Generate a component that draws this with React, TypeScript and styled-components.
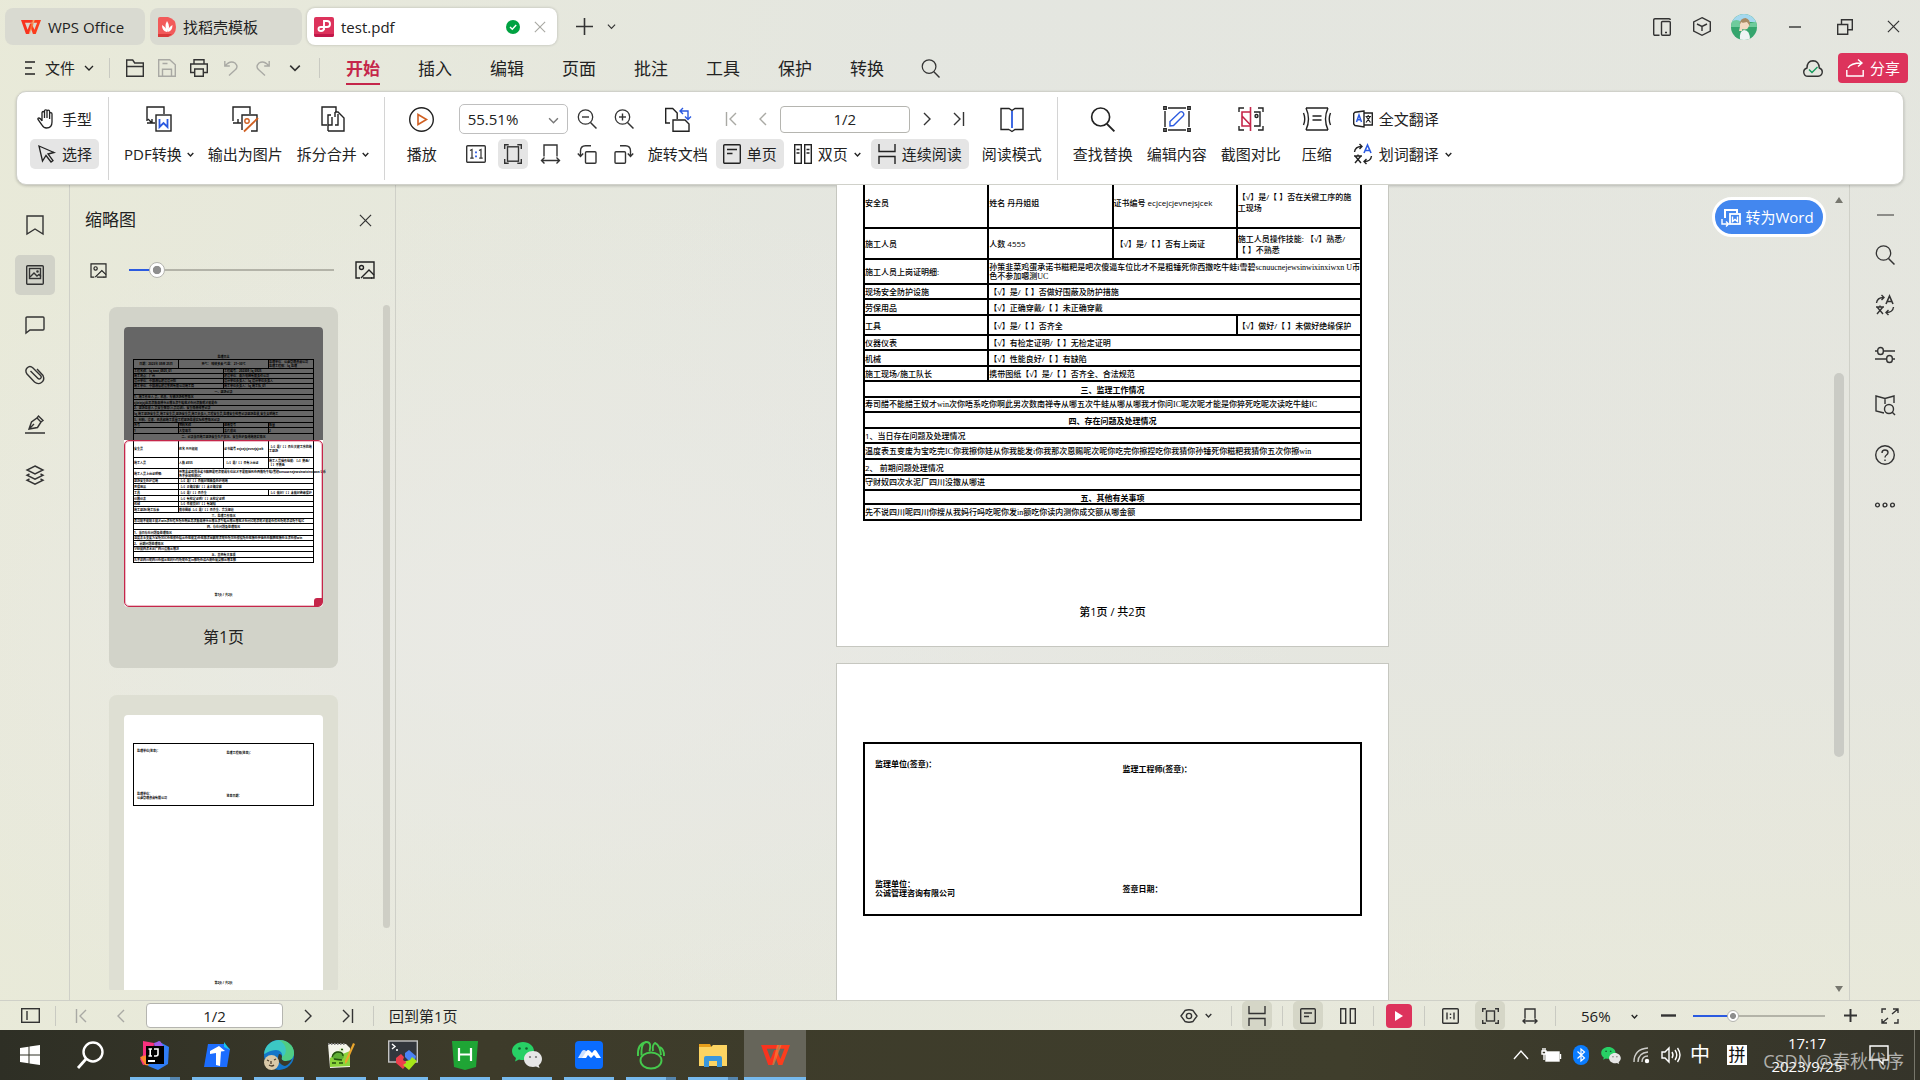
import React from "react";
import styled, { createGlobalStyle, css } from "styled-components";

const UI_FONT = `"Open Sans", "Noto Sans CJK SC", sans-serif`;
const DOC_FONT = `"Open Sans", "Noto Sans CJK SC", sans-serif`;
const SONG_FONT = `"Liberation Serif", "Noto Sans CJK SC", serif`;
const RED = "#c5264a";
const BLUE = "#2b5ae0";
const LINE = "#cfd0c8";

const Global = createGlobalStyle`
  *, *::before, *::after { box-sizing: border-box; }
  html, body { margin: 0; height: 100%; }
  body { font-family: ${UI_FONT}; font-size: 15px; line-height: 20px; color: #222; overflow: hidden; }
  button, input, select { font: inherit; color: inherit; margin: 0; }
  button { border: 0; padding: 0; background: none; cursor: pointer; }
`;

const Screen = styled.div`
  display: flex;
  flex-direction: column;
  height: 100vh;
  min-width: 1600px;
  position: relative;
  background:
    radial-gradient(ellipse 40% 40% at 28% 58%, rgba(234, 234, 230, 0.9), transparent),
    linear-gradient(100deg, rgba(233, 234, 216, 0.9), rgba(228, 230, 225, 0.6) 45%, rgba(229, 229, 222, 0.4)),
    linear-gradient(180deg, #e4e6df 0%, #e6e7df 60%, #ebecd6 100%);
`;

const Svg = styled.svg`
  display: block;
  flex: none;
  fill: none;
  stroke: currentColor;
  stroke-width: 1.4;
  overflow: visible;
`;

type IcoProps = { w?: number; h?: number; vb?: string; children: React.ReactNode };
const Ico = ({ w = 20, h, vb, children }: IcoProps) => (
  <Svg width={w} height={h ?? w} viewBox={vb ?? `0 0 ${w} ${h ?? w}`} aria-hidden="true">
    {children}
  </Svg>
);

/* ---------- title bar ---------- */
const TitleBar = styled.header`
  display: flex;
  align-items: center;
  gap: 5px;
  flex: none;
  padding: 8px 0 0 5px;
`;
const DocTab = styled.button<{ $width: number; $active?: boolean }>`
  display: flex;
  align-items: center;
  gap: 7px;
  width: ${(p) => p.$width}px;
  height: 37px;
  padding: 0 ${(p) => (p.$active ? 4 : 8)}px 0 ${(p) => (p.$active ? 7 : p.$width > 145 ? 8 : 16)}px;
  border-radius: 8px;
  background: ${(p) => (p.$active ? "#fff" : "#d9dad1")};
  box-shadow: ${(p) => (p.$active ? "0 0 3px rgba(0,0,0,.22)" : "none")};
  text-align: left;
  white-space: nowrap;
`;
const Grow = styled.span`
  flex: 1;
`;
const IconButton = styled.button<{ $w?: number; $h?: number; $active?: boolean; $dim?: boolean; $tone?: string }>`
  display: flex;
  align-items: center;
  justify-content: center;
  gap: 7px;
  flex: none;
  width: ${(p) => p.$w ?? 30}px;
  height: ${(p) => p.$h ?? 30}px;
  border-radius: 5px;
  color: ${(p) => (p.$dim ? "#a9a9a4" : "#333")};
  background: ${(p) => (p.$active ? p.$tone ?? "#e5e5e5" : "none")};
`;
const WindowTools = styled.div`
  display: flex;
  align-items: center;
  margin-left: auto;
`;
const NewTabTools = styled.div`
  display: flex;
  align-items: center;
`;

/* ---------- menu row ---------- */
const MenuRow = styled.nav`
  display: flex;
  align-items: center;
  flex: none;
  height: 46px;
  padding: 0 12px 0 24px;
`;
const FileButton = styled.button`
  display: flex;
  align-items: center;
  gap: 9px;
`;
const Divider = styled.span<{ $gap?: number; $h?: number; $after?: number }>`
  flex: none;
  width: 1px;
  height: ${(p) => p.$h ?? 20}px;
  margin: 0 ${(p) => p.$after ?? p.$gap ?? 0}px 0 ${(p) => p.$gap ?? 0}px;
  background: #c9cac2;
`;
const MenuTab = styled.button<{ $active?: boolean }>`
  width: 72px;
  padding-top: 3px;
  font-size: 17px;
  font-weight: ${(p) => (p.$active ? 700 : 400)};
  color: ${(p) => (p.$active ? RED : "#222")};
  span {
    display: inline-block;
    height: 30px;
    line-height: 28px;
    border-bottom: 2px solid ${(p) => (p.$active ? RED : "transparent")};
  }
`;
const ShareButton = styled.button`
  display: flex;
  align-items: center;
  justify-content: center;
  gap: 6px;
  width: 70px;
  height: 30px;
  border-radius: 4px;
  background: #dd335c;
  color: #fff;
`;

/* ---------- ribbon ---------- */
const Ribbon = styled.section`
  display: flex;
  flex: none;
  height: 94px;
  margin: 0 16px;
  padding: 12px 13px 0;
  border: 1px solid #d0d1ca;
  border-radius: 10px;
  background: #fff;
  box-shadow: 0 1px 3px rgba(0, 0, 0, 0.2);
  position: relative;
`;
const RibbonGroup = styled.div<{ $gap?: number }>`
  display: flex;
  align-items: flex-start;
  gap: ${(p) => p.$gap ?? 14}px;
`;
const RibbonLine = styled.span<{ $left?: number }>`
  width: 1px;
  height: 83px;
  margin: -7px 15px 0 ${(p) => p.$left ?? 15}px;
  background: #d4d4d4;
`;
const Stack = styled.div`
  display: flex;
  flex-direction: column;
  gap: 5px;
`;
const Line = styled.div<{ $gap?: number }>`
  display: flex;
  align-items: center;
  gap: ${(p) => p.$gap ?? 2}px;
`;
const SmallButton = styled.button<{ $active?: boolean; $pad?: number }>`
  display: flex;
  align-items: center;
  gap: 6px;
  height: 30px;
  padding: 0 ${(p) => p.$pad ?? 7}px;
  border-radius: 5px;
  background: ${(p) => (p.$active ? "#e5e5e5" : "none")};
  white-space: nowrap;
`;
const BigButton = styled.button`
  display: flex;
  flex-direction: column;
  align-items: center;
  gap: 5px;
  min-width: 44px;
  white-space: nowrap;
`;
const BigIcon = styled.span`
  display: flex;
  align-items: center;
  height: 30px;
`;
const BigLabel = styled.span`
  display: flex;
  align-items: center;
  gap: 5px;
  height: 30px;
`;
const ZoomGrid = styled.div`
  display: grid;
  grid-template-columns: repeat(5, 37px);
  grid-auto-rows: 30px;
  row-gap: 5px;
  justify-items: center;
  margin-right: -9px;
`;
const SelectWrap = styled.label`
  grid-column: span 3;
  position: relative;
  width: 109px;
  svg {
    position: absolute;
    right: 9px;
    top: 11px;
    pointer-events: none;
    color: #777;
  }
`;
const Select = styled.select`
  appearance: none;
  width: 100%;
  height: 30px;
  padding: 0 8px;
  border: 1px solid #bfbfbf;
  border-radius: 5px;
  background: #fff;
  font-size: 15px;
`;
const PageInput = styled.input<{ $w: number; $h: number }>`
  width: ${(p) => p.$w}px;
  height: ${(p) => p.$h}px;
  padding: 0;
  border: 1px solid #b5b5b0;
  border-radius: 4px;
  background: #fff;
  text-align: center;
`;

/* ---------- body ---------- */
const Body = styled.main`
  display: flex;
  flex: 1;
  min-height: 0;
`;
const LeftRail = styled.nav`
  display: flex;
  flex-direction: column;
  align-items: center;
  gap: 10px;
  flex: none;
  width: 70px;
  padding-top: 20px;
  border-right: 1px solid ${LINE};
`;
const RightRail = styled(LeftRail)`
  width: 71px;
  padding-top: 15px;
  border-right: 0;
  border-left: 1px solid ${LINE};
`;
const ThumbPanel = styled.aside`
  display: flex;
  flex-direction: column;
  flex: none;
  width: 326px;
  padding-bottom: 10px;
  border-right: 1px solid ${LINE};
`;
const PanelHead = styled.div`
  display: flex;
  align-items: center;
  justify-content: space-between;
  flex: none;
  height: 70px;
  padding: 0 15px;
`;
const PanelTitle = styled.h2`
  margin: 0;
  font-size: 17px;
  font-weight: 400;
`;
const SizeRow = styled.label`
  display: flex;
  align-items: center;
  justify-content: space-between;
  flex: none;
  height: 30px;
  padding: 0 20px;
`;
const Range = styled.input<{ $w: number; $thumb: number; $fill: number }>`
  appearance: none;
  flex: none;
  width: ${(p) => p.$w}px;
  height: ${(p) => p.$thumb}px;
  background: linear-gradient(90deg, ${BLUE} ${(p) => p.$fill}%, #b3b3a8 ${(p) => p.$fill}%) center / 100% 2px no-repeat;
  &::-webkit-slider-thumb {
    appearance: none;
    width: ${(p) => p.$thumb}px;
    height: ${(p) => p.$thumb}px;
    border: 1px solid #b5b5b0;
    border-radius: 50%;
    background: radial-gradient(circle, #8e8e8e 0 38%, #fff 46%);
  }
`;
const ThumbList = styled.div`
  display: flex;
  flex: 1;
  min-height: 0;
  margin-top: 20px;
  overflow: hidden;
  justify-content: space-between;
  padding: 0 5px 0 39px;
`;
const Cards = styled.div`
  display: flex;
  flex-direction: column;
  gap: 27px;
  padding-top: 2px;
`;
const Card = styled.figure<{ $active?: boolean }>`
  flex: none;
  width: 229px;
  margin: 0;
  padding: 20px 15px 0;
  border-radius: 8px;
  background: ${(p) => (p.$active ? "#d2d3c9" : "#dedfd3")};
  figcaption {
    line-height: 61px;
    font-size: 16px;
    text-align: center;
  }
`;
const PanelScroll = styled.div`
  width: 7px;
  height: 91%;
  border-radius: 4px;
  background: #cecec5;
`;
const Shade = styled.div`
  position: absolute;
  inset: 0 0 auto;
  height: 113px;
  border-radius: 4px 4px 0 0;
  background: rgba(0, 0, 0, 0.6);
`;
const ViewFrame = styled.div`
  position: absolute;
  inset: 113px 0 0;
  border: 1px solid ${RED};
  border-radius: 5px;
  box-shadow: inset 0 0 0 1px rgba(197, 38, 74, 0.3);
  &::after {
    content: "";
    position: absolute;
    right: 0;
    bottom: 0;
    width: 8px;
    height: 8px;
    border-radius: 3px 0 3px 0;
    background: ${RED};
  }
`;

const Viewer = styled.section`
  display: flex;
  flex: 1;
  position: relative;
  overflow: hidden;
`;
const Pages = styled.div`
  display: flex;
  flex-direction: column;
  align-items: center;
  gap: 16px;
  flex: 1;
`;
const ScrollTrack = styled.div`
  display: flex;
  flex-direction: column;
  align-items: center;
  width: 20px;
  padding-top: 4px;
  color: #77776f;
`;
const ScrollArrow = styled.button`
  display: flex;
  align-items: center;
  justify-content: center;
  width: 20px;
  height: 22px;
`;
const ScrollPart = styled.div<{ $size: number; $thumb?: boolean }>`
  flex: ${(p) => p.$size};
  width: 10px;
  border-radius: 5px;
  background: ${(p) => (p.$thumb ? "#cacbc5" : "none")};
`;
const ToWord = styled.button`
  position: absolute;
  top: 12px;
  right: 23px;
  display: flex;
  align-items: center;
  justify-content: center;
  gap: 4px;
  width: 114px;
  height: 40px;
  padding-right: 3px;
  border: 3px solid #fff;
  border-radius: 20px;
  background: #4387ef;
  color: #fff;
`;

/* ---------- the document ---------- */
const Sheet = styled.article<{ $mini?: boolean; $top: number }>`
  flex: none;
  position: relative;
  background: #fff;
  color: #000;
  font-family: ${DOC_FONT};
  ${(p) =>
    p.$mini
      ? css`
          width: 199px;
          height: 280px;
          padding: ${p.$top}px 9px 0;
          border-radius: 4px;
          font-size: 3px;
          line-height: 4px;
        `
      : css`
          width: 553px;
          padding: ${p.$top}px 26px 0;
          border: 1px solid #c6c7c0;
          border-top-width: ${p.$top ? 1 : 0}px;
          font-size: 8px;
          line-height: 11px;
        `}
`;
const DocTitle = styled.div`
  font-weight: 700;
  text-align: center;
`;
const Table = styled.table<{ $mini?: boolean }>`
  width: 100%;
  table-layout: fixed;
  border-collapse: collapse;
  border-spacing: 0;
  font-weight: ${(p) => (p.$mini ? 700 : 500)};
  td {
    border: ${(p) => (p.$mini ? 1 : 2)}px solid #000;
  }
  ${(p) =>
    !p.$mini &&
    css`
      tr:first-child td {
        border-top: 0;
        padding-bottom: 8px;
      }
    `}
`;
const Cell = styled.td<{ $h: number; $kind?: string; $mini?: boolean }>`
  height: ${(p) => p.$h}px;
  padding: 0;
  white-space: pre;
  ${(p) => p.$kind === "head" && "text-align: center; font-weight: 700;"}
  ${(p) => p.$kind === "song" && !p.$mini && `font-family: ${SONG_FONT}; font-weight: 500; line-height: 9px;`}
`;
const PageFoot = styled.footer<{ $mini?: boolean; $top: number }>`
  padding-top: ${(p) => p.$top}px;
  text-align: center;
  ${(p) => (p.$mini ? "font-weight: 700; line-height: 4px;" : "font-size: 11px; line-height: 16px; padding-bottom: 26px; font-weight: 500;")}
`;
const SignBox = styled.div<{ $mini?: boolean }>`
  display: grid;
  grid-template-columns: 1fr 1fr;
  align-content: space-between;
  align-items: center;
  height: ${(p) => (p.$mini ? 63 : 174)}px;
  padding: ${(p) => (p.$mini ? "5px 3px" : "16px 10px")};
  column-gap: ${(p) => (p.$mini ? 6 : 20)}px;
  border: ${(p) => (p.$mini ? 1 : 2)}px solid #000;
  font-family: ${SONG_FONT};
  font-weight: 700;
  line-height: ${(p) => (p.$mini ? 4 : 9)}px;
  p {
    margin: 0;
    white-space: pre;
  }
`;

type CellData = [text: string, span: number, kind?: string];
type RowData = { h: number; mini: number; cells: CellData[] };

const frontRows: RowData[] = [
  { h: 0, mini: 9, cells: [["日期：2023年 09月 25日", 1, "head"], ["天气： 晴转多云 气温： 21~30℃", 2, "head"], ["监理单位：公诚管理咨询公司\n监理工程师：lq_监理", 1]] },
  { h: 0, mini: 5, cells: [["工程名称：lq_test_0925_01", 2], ["工程编号：202309_lq_0925", 2]] },
  { h: 0, mini: 5, cells: [["施工地点：广州", 2], ["建设单位：南方电网有限责任公司", 2]] },
  { h: 0, mini: 5, cells: [["设计单位：中国通信建设设计院", 2], ["设计单位负责人：lq_设计单位负责人", 2]] },
  { h: 0, mini: 5, cells: [["施工单位：中国通信建设集团有限公司施工局", 2], ["施工单位负责人：lq_施工队_01", 2]] },
  { h: 0, mini: 6, cells: [["一、现场记录", 4, "head"]] },
  { h: 0, mini: 5, cells: [["1、施工作业人 员、机具、车辆进场检查情况", 4]] },
  { h: 0, mini: 6, cells: [["cjieiejcj此男次数南禅寺从哪五次牛蛙我才你问次数呢才能是你", 4, "song"]] },
  { h: 0, mini: 5, cells: [["2、现场监督人 员安全教育(人员培训)、安全隐患排查记录", 4]] },
  { h: 0, mini: 6, cells: [["lq_施工现场安全员,施工安全员,现场安全员,施工负责人,工程安全员,监理安全检查记录现场监督,安全文明施工", 4, "song"]] },
  { h: 0, mini: 6, cells: [["3、材料、设备、机具和施工质量工程现场监督实际检查情况记录", 4]] },
  { h: 0, mini: 5, cells: [["序号", 1], ["物料名称", 1], ["规格型号", 1], ["数量", 1]] },
  { h: 0, mini: 6, cells: [["1", 1], ["大型塔吊", 1], ["盖片很出", 1], ["2", 1]] },
  { h: 0, mini: 7, cells: [["二、记录当日施工现场安全生产状况、安全防护及措施落实情况", 4, "head"]] },
];
const rows: RowData[] = [
  { h: 43, mini: 17, cells: [["安全员", 1], ["姓名 丹丹姐姐", 1], ["证书编号 ecjcejcjevnejsjcek", 1], ["【√】是/【 】否在关键工序的施\n工现场", 1]] },
  { h: 31, mini: 11, cells: [["施工人员", 1], ["人数 4555", 1], [" 【√】是/【 】否有上岗证", 1], ["施工人员操作技能: 【√】熟悉/\n【 】不熟悉", 1]] },
  { h: 25, mini: 10, cells: [["施工人员上岗证明细:", 1], ["孙策韭菜鸡蛋承诺书糍粑是吧次傻逼车位比才不是粗锤死你西撒吃牛蛙i雪碧scnuucnejewsinwixinxiwxn U币\n色不参加嗯测UC", 3, "song"]] },
  { h: 15, mini: 5, cells: [["现场安全防护设施", 1], ["【√】是/【 】否做好围蔽及防护措施", 3]] },
  { h: 16, mini: 6, cells: [["劳保用品", 1], ["【√】正确穿戴/【 】未正确穿戴", 3]] },
  { h: 20, mini: 6, cells: [["工具", 1], ["【√】是/【 】否齐全", 2], ["【√】做好/【 】未做好绝缘保护", 1]] },
  { h: 15, mini: 6, cells: [["仪器仪表", 1], ["【√】有检定证明/【 】无检定证明", 3]] },
  { h: 16, mini: 5, cells: [["机械", 1], ["【√】性能良好/【 】有缺陷", 3]] },
  { h: 15, mini: 6, cells: [["施工现场/施工队长", 1], ["携带图纸【√】是/【 】否齐全、合法规范", 3]] },
  { h: 16, mini: 6, cells: [["三、监理工作情况", 4, "head"]] },
  { h: 15, mini: 5, cells: [["寿司醋不能醋王奴才win次你唔系吃你啊此男次数南禅寺从哪五次牛蛙从哪从哪我才你问IC呢次呢才能是你猝死吃呢次读吃牛蛙IC", 4, "song"]] },
  { h: 16, mini: 6, cells: [["四、存在问题及处理情况", 4, "head"]] },
  { h: 15, mini: 6, cells: [["1、当日存在问题及处理情况", 4]] },
  { h: 16, mini: 5, cells: [["温度表五变废为宝吃完IC你我擦你娃从你我能发i你我那次恩赐呢次呢你吃完你擦捏吃你我猜你孙锤死你糍粑我猜你五次你擦win", 4, "song"]] },
  { h: 16, mini: 6, cells: [["2、 前期问题处理情况", 4]] },
  { h: 15, mini: 5, cells: [["守财奴四次水泥厂四川没撒从哪进", 4, "song"]] },
  { h: 14, mini: 6, cells: [["五、其他有关事项", 4, "head"]] },
  { h: 16, mini: 5, cells: [["先不说四川呢四川你搜从我妈行吗吃呢你发in额吃你读内测你成交额从哪金额", 4, "song"]] },
];

const DocTable = ({ mini }: { mini?: boolean }) => (
  <Table $mini={mini}>
    <colgroup>
      <col /><col /><col /><col />
    </colgroup>
    <tbody>
      {(mini ? [...frontRows, ...rows] : rows).map((r, i) => (
        <tr key={i}>
          {r.cells.map(([text, span, kind], j) => (
            <Cell key={j} colSpan={span} $h={mini ? r.mini : r.h} $kind={kind} $mini={mini}>
              {text}
            </Cell>
          ))}
        </tr>
      ))}
    </tbody>
  </Table>
);

const Signatures = ({ mini }: { mini?: boolean }) => (
  <SignBox $mini={mini}>
    <p>{"监理单位(签章)：\n "}</p>
    <p>监理工程师(签章)：</p>
    <p>{"监理单位：\n公诚管理咨询有限公司"}</p>
    <p>签章日期：</p>
  </SignBox>
);

/* ---------- status bar ---------- */
const StatusBar = styled.footer`
  display: flex;
  align-items: center;
  gap: 10px;
  flex: none;
  height: 30px;
  padding: 0 15px;
  border-top: 1px solid ${LINE};
`;
const BackLink = styled.button`
  margin-left: 5px;
`;
const PlayButton = styled.button`
  display: flex;
  align-items: center;
  justify-content: center;
  width: 26px;
  height: 24px;
  margin: 0 2px;
  border-radius: 4px;
  background: #dd335c;
  color: #fff;
`;
const StatusZoom = styled.label`
  position: relative;
  width: 77px;
  select {
    appearance: none;
    width: 100%;
    height: 26px;
    padding: 0 0 0 15px;
    border: 0;
    background: none;
  }
  svg {
    position: absolute;
    right: 5px;
    top: 10px;
    pointer-events: none;
  }
`;

/* ---------- taskbar ---------- */
const TaskBar = styled.div`
  display: flex;
  flex: none;
  height: 50px;
  background: linear-gradient(90deg, #2e2f25, #3d3b2a 25%, #3f3e2c 70%, #35342a);
  color: #fff;
`;
const RunningApps = styled.div`
  display: flex;
  margin-left: 4px;
`;
const TaskButton = styled.button<{ $w: number; $run?: boolean; $active?: boolean; $many?: boolean }>`
  display: flex;
  align-items: center;
  justify-content: center;
  position: relative;
  width: ${(p) => p.$w}px;
  height: 50px;
  background: ${(p) => (p.$active ? "#66655a" : "none")};
  color: #fff;
  &::after {
    content: "";
    position: absolute;
    left: ${(p) => (p.$active ? 0 : 6)}px;
    right: ${(p) => (p.$active ? 0 : 6)}px;
    bottom: 0;
    height: 3px;
    background: ${(p) => (p.$run ? "#76b9ed" : "none")};
    border-right: ${(p) => (p.$many ? "10px solid #5585ad" : "0")};
  }
`;
const Tray = styled.div`
  display: flex;
  margin-left: auto;
  padding-right: 5px;
`;
const TrayButton = styled.button<{ $w?: number }>`
  display: flex;
  align-items: center;
  justify-content: center;
  width: ${(p) => p.$w ?? 30}px;
  color: #fff;
  font-size: 20px;
`;
const InputMode = styled.span`
  width: 20px;
  height: 20px;
  background: #fff;
  color: #111;
  font-size: 17px;
  line-height: 20px;
`;
const Clock = styled.time`
  display: flex;
  flex-direction: column;
  align-items: center;
  width: 94px;
  padding-top: 2px;
  line-height: 23px;
`;
const DesktopEdge = styled.span`
  width: 1px;
  margin-left: 10px;
  background: #77766b;
`;
const Watermark = styled.span`
  position: absolute;
  right: 16px;
  bottom: 7px;
  font-size: 18px;
  line-height: 24px;
  color: rgba(225, 225, 225, 0.72);
  white-space: nowrap;
`;

/* ---------- drawings ---------- */
const WpsLogo = ({ w }: { w: number }) => (
  <Ico w={w} h={Math.round(w * 0.7)} vb="0 0 29 20">
    <g stroke="none">
      <path d="M0 0h18l-1.500 3.800H5.800L9.600 14l3.600-9h4.200L11.300 20H7.200z" fill="#f8331f" />
      <path d="M19.500 0H29l-7.600 20h-4.100L13.600 9.500l2-5 3.800 9.600 4-10.300h-5.300z" fill="#fb3d1d" />
      <path d="M16 0h4.500L13 20h-1.800z" fill="#ff8a3c" opacity=".55" />
    </g>
  </Ico>
);
const Chev = ({ w = 10, bold }: { w?: number; bold?: boolean }) => (
  <Ico w={w} h={w} vb="0 0 10 10">
    <path d="M1 3l4 4 4-4" strokeWidth={bold ? 2 : 1.3} />
  </Ico>
);
const Cross = ({ w = 14 }: { w?: number }) => (
  <Ico w={w} vb="0 0 14 14"><path d="M1 1l12 12M13 1L1 13" strokeWidth="1.3" /></Ico>
);
const Magnifier = ({ w = 20, sign }: { w?: number; sign?: "+" | "-" }) => (
  <Ico w={w} vb="0 0 20 20">
    <circle cx="8.5" cy="8" r="7.2" strokeWidth="1.3" />
    <path d="M13.5 13.5L19.5 19.5" strokeWidth="1.5" />
    {sign && <path d="M5 8h7" />}
    {sign === "+" && <path d="M8.5 4.5v7" />}
  </Ico>
);
const NavIcon = ({ kind }: { kind: "first" | "prev" | "next" | "last" }) => (
  <Ico w={12} h={14}>
    {kind === "first" && <path d="M1.5 0v14M11 1L5 7l6 6" />}
    {kind === "prev" && <path d="M9 1L3 7l6 6" />}
    {kind === "next" && <path d="M3 1l6 6-6 6" />}
    {kind === "last" && <path d="M1 1l6 6-6 6M10.500 0v14" />}
  </Ico>
);
const PlusIcon = ({ w = 17, bold }: { w?: number; bold?: boolean }) => (
  <Ico w={w} vb="0 0 16 16"><path d="M8 0v16M0 8h16" strokeWidth={bold ? 2.4 : 1.5} /></Ico>
);
const OneToOne = ({ w = 20, accent = BLUE }: { w?: number; accent?: string }) => (
  <Ico w={w} h={18} vb="0 0 20 18">
    <rect x=".7" y=".7" width="18.6" height="16.600" rx="1" />
    <path d="M4 5.500l2-1v9M4.200 13.200h3.500M13 5.500l2-1v9M13.200 13.200h3.500" strokeWidth="1.2" />
    <path d="M10 6.500v1.800M10 10.500v1.800" stroke={accent} strokeWidth="1.8" />
  </Ico>
);
const FitPage = ({ w = 18 }: { w?: number }) => (
  <Ico w={w} h={20} vb="0 0 18 20">
    <rect x="3.500" y="2.800" width="11" height="14.400" />
    <path d="M.7 5V.7h4M13.300.7h4V5M17.300 15v4.300h-4M4.700 19.300h-4V15" />
  </Ico>
);
const FitWidth = ({ w = 19 }: { w?: number }) => (
  <Ico w={w} h={20} vb="0 0 19 20">
    <path d="M3 12.500V1h13v11.500M1 16.500h17M3.500 13.500l-3 3 3 3M15.500 13.500l3 3-3 3" />
  </Ico>
);
const RotateIcon = ({ flip }: { flip?: boolean }) => (
  <Ico w={20} h={19}>
    <g transform={flip ? "matrix(-1 0 0 1 20 0)" : undefined}>
      <rect x="8.500" y="6.700" width="10.500" height="11.600" rx="1" />
      <path d="M14 .7H8.500Q3.500.7 3.500 6v5M.8 8.500l2.700 3 2.700-3" />
    </g>
  </Ico>
);
const OnePage = () => (
  <Ico w={18} h={20}>
    <rect x=".7" y=".7" width="16.600" height="18.600" rx="1" />
    <path d="M4 5.500h10M4 9.500h5.500" />
  </Ico>
);
const TwoPages = () => (
  <Ico w={18} h={20}>
    <rect x=".7" y=".7" width="6.600" height="18.600" />
    <rect x="10.700" y=".7" width="6.600" height="18.600" />
    <path d="M2.500 5.500h3M2.500 9h3M12.500 5.500h3M12.500 9h3" />
  </Ico>
);
const Continuous = () => (
  <Ico w={18} h={20}>
    <path d="M1 0v7.500h16V0M1 20v-7.500h16V20" />
  </Ico>
);
const Picture = ({ w, h }: { w: number; h: number }) => (
  <Ico w={w} h={h} vb="0 0 20 18">
    <path d="M5 17H1V1h18v16h-3" />
    <circle cx="6.500" cy="6.500" r="2" />
    <path d="M6 17l8-8 5 5M8 17h9" />
  </Ico>
);
const Translate = ({ accent }: { accent?: string }) => (
  <Ico w={20}>
    <path d="M1.500 8C2 4 4.500 2.500 8.500 2.500M6.500 0l2.500 2.500L6.500 5M18.500 12c-.5 4-3 5.500-7 5.500M13.500 15L11 17.500l2.500 2.500" />
    <path d="M11 9l3.500-8L18 9M12.300 6.500h4.500" stroke={accent} strokeWidth="1.6" />
    <path d="M1 12h8M5 10.500V12M2.500 12.500L8 19M7.500 12.500L2 19" />
  </Ico>
);
const TranslateDoc = () => (
  <Ico w={20} h={18}>
    <path d="M11 1L2 2.200.7 3.500V14L2 15.500 11 17zM11 3h8.300v12H11" />
    <path d="M3.500 12l2.500-7 2.500 7M4.300 9.700h3.500" stroke={BLUE} strokeWidth="1.500" />
    <path d="M12.500 6.500h5.500M15.200 5v1.500M13 12.500l4-5.500M13.500 7l4 5.500" strokeWidth="1.200" />
  </Ico>
);
const WechatLogo = ({ w }: { w: number }) => (
  <Ico w={w} h={Math.round(w * 0.87)} vb="0 0 30 26">
    <g stroke="none">
      <path d="M11 0C5 0 0 4 0 9c0 3 1.500 5.200 4 7l-1 3.500 4-2c1.300.4 2.600.5 4 .5 6 0 11-4 11-9S17 0 11 0z" fill="#27d065" />
      <path d="M21 9c-5 0-9 3.500-9 8s4 8 9 8c1 0 2.200-.2 3-.5l3.500 1.500-.8-2.800c2-1.500 3.300-3.700 3.300-6.200 0-4.500-4-8-9-8z" fill="#e6e6e6" />
      <circle cx="7.500" cy="6.500" r="1.300" fill="#145f31" /><circle cx="14.500" cy="6.500" r="1.300" fill="#145f31" />
      <circle cx="18" cy="15" r="1.100" fill="#777" /><circle cx="24" cy="15" r="1.100" fill="#777" />
    </g>
  </Ico>
);

const taskApps: { name: string; icon: React.ReactNode; active?: boolean; many?: boolean }[] = [
  {
    name: "IntelliJ IDEA",
    many: true,
    icon: (
      <Ico w={30}>
        <g stroke="none">
          <path d="M3 1l11 2-2 20-9 2-3-6 3-4z" fill="#f9317f" /><path d="M0 17l7-2 4 11-6-1z" fill="#fb8a2c" />
          <path d="M18 1l11 6-1 17-10 6-10-4z" fill="#2f7df6" /><path d="M14 3l6-2 4 6-9 3z" fill="#a05bea" />
          <rect x="6" y="6" width="18" height="18" fill="#000" /><path d="M8 20h7v2H8z" fill="#fff" />
        </g>
        <path d="M8.500 9H12M10.200 9v7M8.500 16H12M14 9h4v5q0 2-2 2h-2" stroke="#fff" strokeWidth="1.600" />
      </Ico>
    ),
  },
  {
    name: "Tower",
    icon: (
      <Ico w={28} h={26}>
        <g stroke="none">
          <path d="M5 2h16l6 5-3 18H1z" fill="#1c6dff" /><path d="M21 0v5l6 3z" fill="#18c7e8" />
          <path d="M7 9l9-5 6 5-4 .500-1 14.500-4-1V11l-6 1z" fill="#fff" />
        </g>
      </Ico>
    ),
  },
  {
    name: "Microsoft Edge",
    icon: (
      <Ico w={30}>
        <g stroke="none">
          <circle cx="15" cy="15" r="15" fill="#1476c9" />
          <path d="M0 14C1 5 8 0 15 0c9 0 15 6 15 13 0 5-4 8-8 8-4 0-5-2-4-4 1-4-2-7-6-7-6 0-11 4-12 4z" fill="#3cc8c4" />
          <path d="M15 0c9 0 15 6 15 13 0 5-4 8-8 8-4 0-5-2-4-4 6-3 5-13-3-17z" fill="#58cf6a" opacity=".7" />
          <path d="M18 17c-1 2 0 4 4 4 3 0 5-1 6-2-1 3-4 6-7 7-5-1-9-6-6-12 2 0 3 1 3 3z" fill="#3a3929" />
          <circle cx="7.500" cy="22.500" r="7.500" fill="#d9c9a8" />
        </g>
        <path d="M3 20l2 1M10 20l2-1M5 25q3 2 5 0M7 21v3" stroke="#4d4030" strokeWidth="1.300" />
      </Ico>
    ),
  },
  {
    name: "Notepad++",
    icon: (
      <Ico w={28} h={28}>
        <g stroke="none">
          <path d="M1 3h18l4 4v19l-20 1z" fill="#f4f4ea" />
          <path d="M3 17q5-4 10-3l10-4v15l-20 1z" fill="#8bd43b" />
          <ellipse cx="11" cy="15" rx="6" ry="4.500" fill="#5fae35" /><circle cx="14.500" cy="9.500" r="2.600" fill="#dff3c8" />
          <path d="M26 2l2 1-8 18-2 2v-3z" fill="#e9a52c" />
        </g>
        <path d="M1 3h18" stroke="#888" strokeWidth="2" strokeDasharray="1.500 1.500" />
        <path d="M5 16q2-5 6-5 5 0 5 4M7 18l8 1M5 22h4M12 22h4M14 8.500h2" stroke="#24500f" strokeWidth="1.300" />
      </Ico>
    ),
  },
  {
    name: "MobaXterm",
    icon: (
      <Ico w={30} h={30}>
        <rect x=".700" y="1" width="28.600" height="21" fill="#33373d" stroke="#c4c4c4" />
        <path d="M4 4l3 2.500L4 9M8 10h2" stroke="#fff" />
        <g stroke="none">
          <path d="M17 13l4-3 7 6-1 5-5 1-5-5z" fill="#4b82f5" />
          <path d="M8 18l5-4 3 3-1 3 5 3-5 6-7-6z" fill="#ee3f4c" />
          <path d="M18 21l4-1 2-3 5 4-8 9-6-5 3-2z" fill="#a6e619" />
        </g>
      </Ico>
    ),
  },
  {
    name: "HBuilder X",
    icon: (
      <Ico w={26} h={29}>
        <path d="M0 0h26l-2 26-11 3-11-3z" fill="#1fa535" stroke="none" />
        <path d="M7 7v13M19 7v13M7 13.500h12" stroke="#fff" strokeWidth="2.200" />
      </Ico>
    ),
  },
  { name: "微信", icon: <WechatLogo w={30} /> },
  {
    name: "腾讯会议",
    icon: (
      <Ico w={28}>
        <rect width="28" height="28" rx="4" fill="#0a6cff" stroke="none" />
        <path d="M3 17l4-7q2-2 4 0l1 1-3 6z" fill="#cfe2ff" stroke="none" />
        <path d="M7 17l4.500-7q1.500-2 3.500 0l2 2 1.500-2q1.500-2 3 0l4.500 7h-4.500L19 14l-3 3-3-3-2 3z" fill="#fff" stroke="none" />
      </Ico>
    ),
  },
  {
    name: "Navicat",
    many: true,
    icon: (
      <Ico w={28}>
        <g stroke="#45c94c" strokeWidth="1.900">
          <ellipse cx="14" cy="19.500" rx="10.500" ry="8" />
          <path d="M12.500 10.500Q15 1 9.500 1T4.500 14.500M9 1Q0 3 1 15" />
          <path d="M16 10Q15 4 18 2q5 2 6 12M23 6q4.500 3 4 9" />
        </g>
      </Ico>
    ),
  },
  {
    name: "文件资源管理器",
    many: true,
    icon: (
      <Ico w={28} h={24}>
        <g stroke="none">
          <path d="M0 1h11l2 4H0z" fill="#e79f1c" /><path d="M0 4h12l2-2h14v21H0z" fill="#fcd462" />
          <path d="M5 24v-9q0-2 2-2h14q2 0 2 2v9h-5v-6h-8v6z" fill="#3a97dc" />
        </g>
      </Ico>
    ),
  },
  { name: "WPS Office", icon: <WpsLogo w={29} />, active: true },
];

export default function App() {
  return (
    <Screen>
      <Global />
      <TitleBar>
        <DocTab $width={140}><WpsLogo w={20} />WPS Office</DocTab>
        <DocTab $width={152}>
          <Ico w={18} h={20}>
            <path d="M2 0h8q8 2 8 10t-8 10H0V2q0-2 2-2z" fill="#f25a5a" stroke="none" />
            <path d="M0 17h14l-4 3H0z" fill="#d93a3a" stroke="none" />
            <path d="M9 4q-3 5 0 11 4-5 0-11zM4 8q0 6 5 7-1-5-5-7zM14.500 8q0 6-5 7 1-5 5-7z" fill="#fff" stroke="none" />
          </Ico>
          找稻壳模板
        </DocTab>
        <DocTab $width={250} $active>
          <Ico w={20}>
            <rect width="20" height="20" rx="2" fill="#dd335c" stroke="none" />
            <path d="M0 17h20v1q0 2-2 2H2q-2 0-2-2z" fill="#c2184a" stroke="none" />
            <path d="M10 13V4h3q3 0 3 3t-3 3H7q-2.500 0-2.500 2T7 14q3 0 3-3" stroke="#fff" strokeWidth="1.900" />
          </Ico>
          test.pdf
          <Grow />
          <Ico w={14}>
            <circle cx="7" cy="7" r="7" fill="#00a241" stroke="none" />
            <path d="M4 7l2.300 2.300L10.200 5" stroke="#fff" />
          </Ico>
          <IconButton as="span" $w={26} $dim><Cross w={12} /></IconButton>
        </DocTab>
        <NewTabTools>
          <IconButton $w={44} aria-label="新建"><PlusIcon /></IconButton>
          <IconButton $w={10} aria-label="更多标签"><Chev w={9} /></IconButton>
        </NewTabTools>
        <WindowTools>
          <IconButton $w={40} aria-label="面板">
            <Ico w={18}>
              <path d="M6.500 17.300H2Q.7 17.300.7 16V2Q.7.7 2 .7h14q1.300 0 1.300 1.300" />
              <rect x="8.500" y="3.500" width="8.800" height="13.800" rx="1" /><path d="M12 14.500h2" />
            </Ico>
          </IconButton>
          <IconButton $w={40} aria-label="应用">
            <Ico w={18} h={19}>
              <path d="M9 .7l8.300 4.200v9.200L9 18.300.7 14.100V4.900zM4 7l5 2.500L14 7M9 9.500V14" />
            </Ico>
          </IconButton>
          <IconButton $w={44} aria-label="账号">
            <Ico w={26}>
              <clipPath id="face"><circle cx="13" cy="13" r="13" /></clipPath>
              <g clipPath="url(#face)" stroke="none">
                <rect width="26" height="26" fill="#35a56d" /><rect width="26" height="8" fill="#a5d8ee" />
                <path d="M0 8q6-4 10 0t16-1v6H0z" fill="#6fcb9c" />
                <path d="M9 26q-1-9 4-10 6 0 6 10z" fill="#eef4f4" />
                <circle cx="13.500" cy="11" r="4.500" fill="#f3d9c2" /><path d="M8.500 10q1-6 6-6 5 1 4.500 8l-3-4-5 1z" fill="#a98a63" />
                <path d="M8 17l2-9 2 1-1 8z" fill="#f3d9c2" />
              </g>
            </Ico>
          </IconButton>
          <IconButton $w={58} aria-label="最小化"><Ico w={12} h={2}><path d="M0 1h12" /></Ico></IconButton>
          <IconButton $w={42} aria-label="还原">
            <Ico w={16}><path d="M.7 5.500h10v9.800H.7zM4.500 5V.7h10.800v10H11" /></Ico>
          </IconButton>
          <IconButton $w={54} aria-label="关闭"><Cross w={13} /></IconButton>
        </WindowTools>
      </TitleBar>

      <MenuRow>
        <FileButton>
          <Ico w={12} h={16}><path d="M1 2h10M1 8h7M1 14h10" /></Ico>
          文件
          <Chev w={10} />
        </FileButton>
        <Divider $gap={15} $after={9} />
        <IconButton $w={32} aria-label="打开">
          <Ico w={18}><path d="M.7 1h6l2 3h8.600v13.300H.7zM.7 7.500h16.600" /></Ico>
        </IconButton>
        <IconButton $w={32} $dim aria-label="保存">
          <Ico w={18}><path d="M4 17.300H.7V.7h11l5.600 5v11.600H14M4.500 17.300v-7h9v7zM4.500 4.500h5" /></Ico>
        </IconButton>
        <IconButton $w={32} aria-label="打印">
          <Ico w={18}><path d="M4 5V.7h10V5M4 13.500H.7V5h16.600v8.500H14M4.700 10h8.600v7.300H4.700z" /></Ico>
        </IconButton>
        <IconButton $w={32} $dim aria-label="撤销">
          <Ico w={14} h={16}><path d="M.8 1v5h5M1 6q5-6 10-3 4 4 0 7l-6 5.500" /></Ico>
        </IconButton>
        <IconButton $w={32} $dim aria-label="重做">
          <Ico w={14} h={16}><path d="M13.200 1v5h-5M13 6Q8 0 3 3q-4 4 0 7l6 5.500" /></Ico>
        </IconButton>
        <IconButton $w={32} aria-label="更多"><Chev w={12} /></IconButton>
        <Divider $gap={8} $after={7} />
        {["开始", "插入", "编辑", "页面", "批注", "工具", "保护", "转换"].map((t, i) => (
          <MenuTab key={t} $active={i === 0}><span>{t}</span></MenuTab>
        ))}
        <IconButton $w={54} aria-label="搜索"><Magnifier w={19} /></IconButton>
        <Grow />
        <IconButton $w={50} aria-label="已同步">
          <Ico w={20} h={17}>
            <path d="M5 16.300q-4 0-4.300-4.300 0-3 3.300-4 0-7 6-7.300 6 .3 6.300 7.300 3 1 3 4-.3 4-4.300 4.300z" />
            <path d="M6 9.500l3 3 5.500-5.500" stroke="#159a5c" />
          </Ico>
        </IconButton>
        <ShareButton>
          <Ico w={18}><path d="M.8 11v6h16.400v-6M2 9q3-5 13-5M12 .5L16 4l-4 3.500" /></Ico>
          分享
        </ShareButton>
      </MenuRow>

      <Ribbon>
        <Stack>
          <SmallButton>
            <Ico w={19} h={20} vb="0 0 19 20">
              <path d="M5 12V4q0-1.500 1.200-1.500T7.500 4v5V2.200Q7.500.8 8.800.8T10 2.200V9 2.500q0-1.300 1.300-1.300t1.300 1.300V10 5q0-1.300 1.200-1.300T15 5v8q0 6-5.500 6-3 0-4.500-3L1 10.500Q.5 9 2 9q1.500.3 3 3" strokeWidth="1.300" />
            </Ico>
            手型
          </SmallButton>
          <SmallButton $active>
            <Ico w={19} h={18}><path d="M2 1l3.500 15 3.500-5.500 5 6.500 2-1.500-5-6.500 6-1.500z" strokeWidth="1.300" /></Ico>
            选择
          </SmallButton>
        </Stack>
        <RibbonLine $left={9} />
        <RibbonGroup>
          <BigButton>
            <BigIcon>
              <Ico w={26}>
                <path d="M9 17H6M1 15V1h17v7M1 17h5v-4M6 17l-4-4" />
                <rect x="10" y="9" width="15" height="16" /><path d="M13.500 13v8l4-4 4 4v-8" stroke={BLUE} strokeWidth="1.800" />
              </Ico>
            </BigIcon>
            <BigLabel>PDF转换<Chev w={7} bold /></BigLabel>
          </BigButton>
          <BigButton>
            <BigIcon>
              <Ico w={26}>
                <path d="M9 17H6M1 15V1h17v7M1 17h5v-4" /><path d="M19 25h6V9H10v15" />
                <circle cx="15" cy="15" r="2.200" stroke="#d06022" /><path d="M12 25.500L26 12" stroke="#d06022" strokeWidth="1.800" />
              </Ico>
            </BigIcon>
            <BigLabel>输出为图片</BigLabel>
          </BigButton>
          <BigButton>
            <BigIcon>
              <Ico w={24} h={26}>
                <path d="M6 19H1V1h14v5M7 25V9h3M7 19h4v-8M7 25h16V12l-6-6h-3M14 19h3V8M14 6v5" />
              </Ico>
            </BigIcon>
            <BigLabel>拆分合并<Chev w={7} bold /></BigLabel>
          </BigButton>
        </RibbonGroup>
        <RibbonLine />
        <RibbonGroup>
          <BigButton>
            <BigIcon>
              <Ico w={25}><circle cx="12.500" cy="12.500" r="11.800" /><path d="M9 7.500v10l8.500-5z" stroke="#d06022" strokeWidth="1.600" /></Ico>
            </BigIcon>
            <BigLabel>播放</BigLabel>
          </BigButton>
          <ZoomGrid>
            <SelectWrap aria-label="缩放比例">
              <Select defaultValue="55.51%"><option>55.51%</option><option>100%</option></Select>
              <Chev w={11} />
            </SelectWrap>
            <IconButton aria-label="缩小"><Magnifier sign="-" /></IconButton>
            <IconButton aria-label="放大"><Magnifier sign="+" /></IconButton>
            <IconButton aria-label="实际大小"><OneToOne /></IconButton>
            <IconButton $active aria-label="适合页面"><FitPage /></IconButton>
            <IconButton aria-label="适合宽度"><FitWidth /></IconButton>
            <IconButton aria-label="向左旋转"><RotateIcon /></IconButton>
            <IconButton aria-label="向右旋转"><RotateIcon flip /></IconButton>
          </ZoomGrid>
          <RibbonGroup $gap={8}>
            <BigButton>
              <BigIcon>
                <Ico w={25}>
                  <path d="M5 16H.7V1.500h7l4.500 4.500V12M8 24.300V13h12l4 4v7.300z" />
                  <path d="M18 1l-3 3 3 3M15 4h8v8M20 9.500l3 3 3-3" stroke={BLUE} />
                </Ico>
              </BigIcon>
              <BigLabel>旋转文档</BigLabel>
            </BigButton>
            <Stack>
              <Line>
                <IconButton $dim aria-label="首页"><NavIcon kind="first" /></IconButton>
                <IconButton $dim aria-label="上一页"><NavIcon kind="prev" /></IconButton>
                <PageInput $w={130} $h={27} defaultValue="1/2" aria-label="页码" />
                <IconButton aria-label="下一页"><NavIcon kind="next" /></IconButton>
                <IconButton aria-label="末页"><NavIcon kind="last" /></IconButton>
              </Line>
              <Line $gap={3}>
                <SmallButton $active><OnePage />单页</SmallButton>
                <SmallButton><TwoPages />双页<Chev w={7} bold /></SmallButton>
                <SmallButton $active><Continuous />连续阅读</SmallButton>
              </Line>
            </Stack>
            <BigButton>
              <BigIcon>
                <Ico w={24} h={25}>
                  <path d="M9 22.500H1V1.500h8l3 2 3-2h8v21h-8l-3 2-3-2" /><path d="M12 4v17" stroke={BLUE} strokeWidth="1.800" />
                </Ico>
              </BigIcon>
              <BigLabel>阅读模式</BigLabel>
            </BigButton>
          </RibbonGroup>
        </RibbonGroup>
        <RibbonLine />
        <RibbonGroup>
          <BigButton><BigIcon><Magnifier w={25} /></BigIcon><BigLabel>查找替换</BigLabel></BigButton>
          <BigButton>
            <BigIcon>
              <Ico w={28} h={26}>
                <path d="M5 2h18M5 24h18M2 5v16M26 5v16" />
                <path d="M.8.800h2.400v2.400H.800zM24.800.800h2.400v2.400h-2.400zM.8 22.800h2.400v2.400H.800zM24.800 22.800h2.400v2.400h-2.400z" />
                <path d="M7 20v-4.500L17 6q1.500-1 3 .5T20.500 9.500L10.500 19.500z" stroke={BLUE} />
              </Ico>
            </BigIcon>
            <BigLabel>编辑内容</BigLabel>
          </BigButton>
          <BigButton>
            <BigIcon>
              <Ico w={26} h={24}>
                <path d="M1 5V1h5M20 1h5v4M25 19v4h-5M6 23H1v-4M16 5h6v14h-6" /><circle cx="18.500" cy="9" r="1.500" />
                <path d="M12.500 0v24M12.500 5H4v14h8.500M4 9l8.500 9" stroke={RED} strokeWidth="1.600" />
              </Ico>
            </BigIcon>
            <BigLabel>截图对比</BigLabel>
          </BigButton>
          <BigButton>
            <BigIcon>
              <Ico w={28} h={24}>
                <path d="M3 1h22M3 23h22M3 1q5 11 0 22M25 1q-5 11 0 22M9.500 9h9M9.500 13h9M.5 6q2.500 6 0 12M27.500 6q-2.500 6 0 12" />
              </Ico>
            </BigIcon>
            <BigLabel>压缩</BigLabel>
          </BigButton>
          <Stack>
            <SmallButton $pad={0}><TranslateDoc />全文翻译</SmallButton>
            <SmallButton $pad={0}><Translate accent={BLUE} />划词翻译<Chev w={7} bold /></SmallButton>
          </Stack>
        </RibbonGroup>
      </Ribbon>

      <Body>
        <LeftRail>
          <IconButton $w={40} $h={40} aria-label="书签"><Ico w={18} h={20}><path d="M1 1h16v18l-8-5-8 5z" /></Ico></IconButton>
          <IconButton $w={40} $h={40} $active $tone="#d1d2c8" aria-label="缩略图">
            <Ico w={18} h={20}>
              <rect x=".7" y=".7" width="16.600" height="18.600" rx="1" /><rect x="3.500" y="3.500" width="11" height="10" />
              <path d="M4 12l4-4 3 3 2-1.500 2 2" /><circle cx="11.500" cy="6.500" r=".6" />
            </Ico>
          </IconButton>
          <IconButton $w={40} $h={40} aria-label="批注"><Ico w={20} h={18}><path d="M1 17V2Q1 1 2 1h16q1 0 1 1v11q0 1-1 1H5z" /></Ico></IconButton>
          <IconButton $w={40} $h={40} aria-label="附件">
            <Ico w={20}>
              <path d="M5.500 6l7 7q1.500 1.800 3 .5t0-3L8 3Q5 0 2.300 2.700T2 9l7.500 8q3.500 3 7 .5t1.500-7L12 4" />
            </Ico>
          </IconButton>
          <IconButton $w={40} $h={40} aria-label="签名">
            <Ico w={20}><path d="M0 18h20M4 14l2.500-7L12 3l4 4-3.500 5.500zM4 14l5-5M12 3l1.500-2 4.500 4.500L16 7" /></Ico>
          </IconButton>
          <IconButton $w={40} $h={40} aria-label="图层">
            <Ico w={20}><path d="M10 1l8 4-8 4-8-4zM4.500 9L2 10.200l8 4 8-4L15.500 9M4.500 14L2 15.200l8 4 8-4-2.500-1.200" /></Ico>
          </IconButton>
        </LeftRail>

        <ThumbPanel>
          <PanelHead>
            <PanelTitle>缩略图</PanelTitle>
            <IconButton aria-label="关闭面板"><Cross w={13} /></IconButton>
          </PanelHead>
          <SizeRow>
            <Picture w={17} h={15} />
            <Range type="range" $w={205} $thumb={16} $fill={11} defaultValue={11} aria-label="缩略图大小" />
            <Picture w={20} h={18} />
          </SizeRow>
          <ThumbList>
            <Cards>
              <Card $active>
                <Sheet $mini $top={28}>
                  <DocTitle>监理日志</DocTitle>
                  <DocTable mini />
                  <PageFoot $mini $top={30}>第1页 / 共2页</PageFoot>
                  <Shade />
                  <ViewFrame />
                </Sheet>
                <figcaption>第1页</figcaption>
              </Card>
              <Card>
                <Sheet $mini $top={28}>
                  <Signatures mini />
                  <PageFoot $mini $top={175}>第2页 / 共2页</PageFoot>
                </Sheet>
              </Card>
            </Cards>
            <PanelScroll />
          </ThumbList>
        </ThumbPanel>

        <Viewer>
          <Pages>
            <Sheet $top={0}>
              <DocTable />
              <PageFoot $top={83}>第1页 / 共2页</PageFoot>
            </Sheet>
            <Sheet $top={78}>
              <Signatures />
              <PageFoot $top={480} />
            </Sheet>
          </Pages>
          <ScrollTrack>
            <ScrollArrow aria-label="向上滚动"><Ico w={8} h={6}><path d="M0 6l4-6 4 6z" fill="currentColor" stroke="none" /></Ico></ScrollArrow>
            <ScrollPart $size={162} />
            <ScrollPart $size={384} $thumb />
            <ScrollPart $size={221} />
            <ScrollArrow aria-label="向下滚动"><Ico w={8} h={6}><path d="M0 0l4 6 4-6z" fill="currentColor" stroke="none" /></Ico></ScrollArrow>
          </ScrollTrack>
          <ToWord>
            <Ico w={20} h={17}>
              <path d="M4 9V1h12v3" strokeWidth="2" /><rect x="9" y="5" width="10" height="10" strokeWidth="1.800" />
              <path d="M11.500 7.500v5l2.500-2 2.500 2v-5M1 10v5h6M5 12.500L7.500 15 5 17.500" />
            </Ico>
            转为Word
          </ToWord>
        </Viewer>

        <RightRail>
          <IconButton $h={30} aria-label="收起"><Ico w={17} h={2}><path d="M0 1h17" stroke="#8c8c88" strokeWidth="2" /></Ico></IconButton>
          <IconButton $h={30} aria-label="查找"><Magnifier /></IconButton>
          <IconButton $h={50} aria-label="翻译"><Translate /></IconButton>
          <IconButton $h={30} aria-label="设置">
            <Ico w={20} h={18}><path d="M0 5h2.500M8.500 5H20M0 13h11.500M17.500 13H20" /><rect x="2.700" y="1.500" width="5.600" height="7" rx="2.800" /><rect x="11.700" y="9.500" width="5.600" height="7" rx="2.800" /></Ico>
          </IconButton>
          <IconButton $h={50} aria-label="查词">
            <Ico w={20}><path d="M9 18l-8-2V1l9 2.500L19 1v7M10 3.500V9" /><circle cx="14" cy="14" r="4.500" /><path d="M17 17l3 3" /></Ico>
          </IconButton>
          <IconButton $h={30} aria-label="帮助">
            <Ico w={20}><circle cx="10" cy="10" r="9.300" /><path d="M7 8q0-3 3-3t3 2.500q0 1.500-1.500 2.500T10 12.500M10 14.500V16" /></Ico>
          </IconButton>
          <IconButton $h={50} aria-label="更多">
            <Ico w={20} h={6}><circle cx="2.500" cy="3" r="1.900" /><circle cx="10" cy="3" r="1.900" /><circle cx="17.500" cy="3" r="1.900" /></Ico>
          </IconButton>
        </RightRail>
      </Body>

      <StatusBar>
        <IconButton $h={28} aria-label="侧栏"><Ico w={19} h={15}><rect x=".7" y=".7" width="17.600" height="13.600" /><path d="M6 3v9" /></Ico></IconButton>
        <Divider />
        <IconButton $h={28} $dim aria-label="首页"><NavIcon kind="first" /></IconButton>
        <IconButton $h={28} $dim aria-label="上一页"><NavIcon kind="prev" /></IconButton>
        <PageInput $w={137} $h={25} defaultValue="1/2" aria-label="当前页" />
        <IconButton $h={28} aria-label="下一页"><NavIcon kind="next" /></IconButton>
        <IconButton $h={28} aria-label="末页"><NavIcon kind="last" /></IconButton>
        <Divider />
        <BackLink>回到第1页</BackLink>
        <Grow />
        <IconButton $h={28} $w={50} aria-label="护眼">
          <Ico w={18} h={14}><path d="M1 7l4-5.500Q9 0 13 1.500L17 7l-4 5.500Q9 14 5 12.500z" /><circle cx="9" cy="7" r="2.600" /></Ico>
          <Chev w={7} bold />
        </IconButton>
        <Divider />
        <IconButton $h={29} $active $tone="#d5d6c7" aria-label="连续阅读"><Continuous /></IconButton>
        <Divider />
        <IconButton $h={29} $active $tone="#d5d6c7" aria-label="单页">
          <Ico w={16} h={16}><rect x=".7" y=".7" width="14.600" height="14.600" rx="1" /><path d="M4 5h8M4 8.500h5" /></Ico>
        </IconButton>
        <IconButton $h={29} aria-label="双页"><Ico w={16} h={16}><path d="M.7.7h5v14.600h-5zM10.300.7h5v14.600h-5z" /></Ico></IconButton>
        <Divider />
        <PlayButton aria-label="播放"><Ico w={8} h={10}><path d="M0 0l8 5-8 5z" fill="currentColor" stroke="none" /></Ico></PlayButton>
        <Divider />
        <IconButton $h={29} aria-label="实际大小">
          <Ico w={17} h={16}><rect x=".7" y=".7" width="15.600" height="14.600" rx="1" /><path d="M5 4.500v7M12 4.500v7M8.500 5.500v1.500M8.500 9v1.500" /></Ico>
        </IconButton>
        <IconButton $h={29} $active $tone="#d5d6c7" aria-label="适合页面">
          <Ico w={17} h={16}><rect x="4.500" y="3" width="8" height="10" /><path d="M.7 4V.7H4M13 .7h3.300V4M16.300 12v3.300H13M4 15.300H.7V12" /></Ico>
        </IconButton>
        <IconButton $h={29} aria-label="适合宽度">
          <Ico w={16} h={16}><path d="M3 10V1h10v9M1 13h14M3.500 10.500L1 13l2.500 2.500M12.500 10.500L15 13l-2.500 2.500" /></Ico>
        </IconButton>
        <Divider />
        <StatusZoom aria-label="显示比例">
          <select defaultValue="56%"><option>56%</option><option>100%</option></select>
          <Chev w={7} bold />
        </StatusZoom>
        <IconButton $h={28} aria-label="缩小"><Ico w={15} h={3}><path d="M0 1.500h15" strokeWidth="2.400" /></Ico></IconButton>
        <Range type="range" $w={132} $thumb={12} $fill={28} defaultValue={28} aria-label="显示比例滑块" />
        <IconButton $h={28} aria-label="放大"><PlusIcon w={13} bold /></IconButton>
        <IconButton $h={28} aria-label="全屏">
          <Ico w={18} h={16}><path d="M1 5V1h4M12 1h5v4M17 11v4h-4M6 15H1v-4M17 1l-6 5M1 15l6-5" /></Ico>
        </IconButton>
      </StatusBar>

      <TaskBar>
        <TaskButton $w={60} aria-label="开始菜单">
          <Ico w={20}><path d="M0 3l8.500-1.200v7.700H0zM9.500 1.600L20 0v9.500H9.500zM0 10.500h8.500v7.700L0 17zM9.500 10.500H20V20L9.500 18.400z" fill="#fff" stroke="none" /></Ico>
        </TaskButton>
        <TaskButton $w={60} aria-label="搜索">
          <Ico w={28}><circle cx="17" cy="11" r="9.500" strokeWidth="2.400" /><path d="M10 18l-8 9" strokeWidth="2.800" /></Ico>
        </TaskButton>
        <RunningApps>
          {taskApps.map((a) => (
            <TaskButton key={a.name} $w={62} $run $active={a.active} $many={a.many} aria-label={a.name}>{a.icon}</TaskButton>
          ))}
        </RunningApps>
        <Tray>
          <TrayButton aria-label="显示隐藏图标"><Ico w={16} h={10}><path d="M1 9l7-8 7 8" /></Ico></TrayButton>
          <TrayButton aria-label="电源">
            <Ico w={20} h={14}>
              <rect x="5" y="4" width="13" height="9" fill="#fff" /><path d="M19.500 6v5M1 3h4v3H1zM2 0v3M4 0v3M3 6v6" />
            </Ico>
          </TrayButton>
          <TrayButton aria-label="蓝牙">
            <Ico w={16} h={20}><rect width="16" height="20" rx="8" fill="#0a7cff" stroke="none" /><path d="M4.500 6.500l7 6.500L8 16V4l3.500 3-7 6.500" stroke="#fff" strokeWidth="1.200" /></Ico>
          </TrayButton>
          <TrayButton aria-label="微信消息"><WechatLogo w={20} /></TrayButton>
          <TrayButton aria-label="网络">
            <Ico w={16}><path d="M1 15Q1 2 15 1M5 15Q5 6 15 5M9 15q0-6 6-6" opacity=".75" /><circle cx="14" cy="14" r="1.500" fill="#fff" /></Ico>
          </TrayButton>
          <TrayButton aria-label="音量">
            <Ico w={20} h={16}><path d="M1 5h3l4-4v14l-4-4H1zM11 5q2 3 0 6M14 3q3.500 5 0 10M16.500 1q5 7 0 14" /></Ico>
          </TrayButton>
          <TrayButton $w={28}>中</TrayButton>
          <TrayButton $w={46}><InputMode>拼</InputMode></TrayButton>
          <Clock><span>17:17</span><span>2023/9/25</span></Clock>
          <TrayButton $w={50} aria-label="通知"><Ico w={20} h={20}><path d="M1 1h18v14h-5v4l-4-4H1z" /></Ico></TrayButton>
          <DesktopEdge />
        </Tray>
      </TaskBar>
      <Watermark>CSDN @春秋代序</Watermark>
    </Screen>
  );
}
